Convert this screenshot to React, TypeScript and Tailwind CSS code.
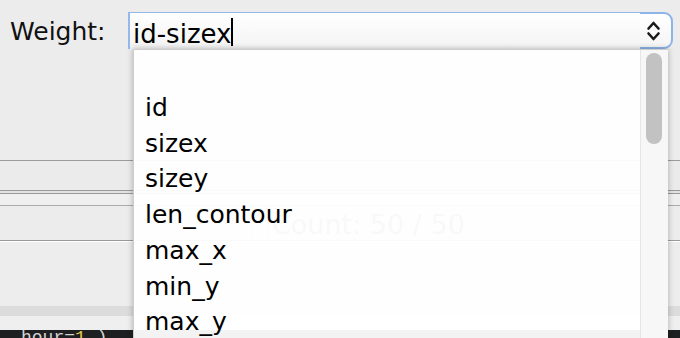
import React from 'react';

const items = ['', 'id', 'sizex', 'sizey', 'len_contour', 'max_x', 'min_y', 'max_y', 'min_x', 'area'];

function Chevrons() {
  return (
    <svg width="15" height="24" viewBox="0 0 15 24" fill="none">
      <path d="M2.5 9.5 L7.5 4 L12.5 9.5" stroke="#1a1a1a" strokeWidth="2.6" strokeLinecap="round" strokeLinejoin="round" />
      <path d="M2.5 14.5 L7.5 20 L12.5 14.5" stroke="#1a1a1a" strokeWidth="2.6" strokeLinecap="round" strokeLinejoin="round" />
    </svg>
  );
}

export default function App() {
  return (
    <div className="relative w-[680px] h-[338px] overflow-hidden bg-[#ececec] font-['DejaVu_Sans',sans-serif] text-[#111]">
      {/* window content under the popup */}
      <div className="flex flex-col">
        <div className="h-[160px] flex items-start pl-[10px] pt-[12px]">
          <span className="w-[118px] mt-[7px] text-[25px] leading-none">Weight:</span>
          <div className="flex w-[545px] h-[37px]">
            <div className="flex-1 flex items-start border-l-2 border-t border-[#94b8ea] bg-gradient-to-b from-white to-[#f3f3f3] pl-[3px] pt-[8px]">
              <span className="text-[26px] leading-none text-black">id-sizex</span>
              <span className="w-[2px] h-[28px] -mt-[3px] bg-black" />
            </div>
            <div className="w-[33px] flex items-center justify-center pr-[4px] rounded-r-[9px] border-2 border-l-0 border-[#8db4ea] bg-gradient-to-b from-white to-[#f5f5f5]">
              <Chevrons />
            </div>
          </div>
        </div>
        <div className="h-px bg-[#9c9c9c]" />
        <div className="h-[29px] bg-[#ebebeb]" />
        <div className="h-px bg-[#9a9a9a]" />
        <div className="h-[2px] bg-[#e2e2e2]" />
        <div className="h-px bg-[#9a9a9a]" />
        <div className="h-[11px] bg-[#efefef]" />
        <div className="h-px bg-[#ababab]" />
        <div className="h-[34px] bg-[#ececec] flex pl-[252px]">
          <div className="w-[16px] border-x border-[#c4c4c4]" />
          <span className="pl-[4px] pt-[5px] text-[27px] leading-none text-[#7a7a7a]">Count: 50 / 50</span>
        </div>
        <div className="h-px bg-[#9a9a9a]" />
        <div className="h-px bg-white" />
        <div className="h-[64px] bg-[#ededed]" />
        <div className="h-[10px] bg-[#dcdcdc]" />
        <div className="h-[14px] bg-[#efefef]" />
        <div className="h-[20px] bg-[#1d1f21] overflow-hidden pl-[21px]">
          <div className="-mt-[1px] font-['Liberation_Mono',monospace] text-[18px] leading-none text-[#d4d4d4] whitespace-pre">
            hour=<span className="text-[#e6c84a]">1</span> )
          </div>
        </div>
      </div>

      {/* completion popup */}
      <div className="absolute left-[133px] top-[49px] w-[535px] h-[300px] bg-white/95 border-l border-t border-[#cdcdcd] shadow-[0_0_6px_rgba(0,0,0,0.28)]">
        <div className="pt-[4px] pl-[11px] pr-[28px]">
          {items.map((it, i) => (
            <div key={i} className="h-[35.75px] text-[25px] leading-[35.75px] text-black">
              {it}
            </div>
          ))}
        </div>
        <div className="absolute right-0 top-0 bottom-0 w-[28px] bg-[#f7f7f7]/95 border-l border-[#e6e6e6]">
          <div className="ml-[5px] mt-[3px] w-[16px] h-[91px] rounded-full bg-[#c2c2c2]" />
        </div>
      </div>
    </div>
  );
}
